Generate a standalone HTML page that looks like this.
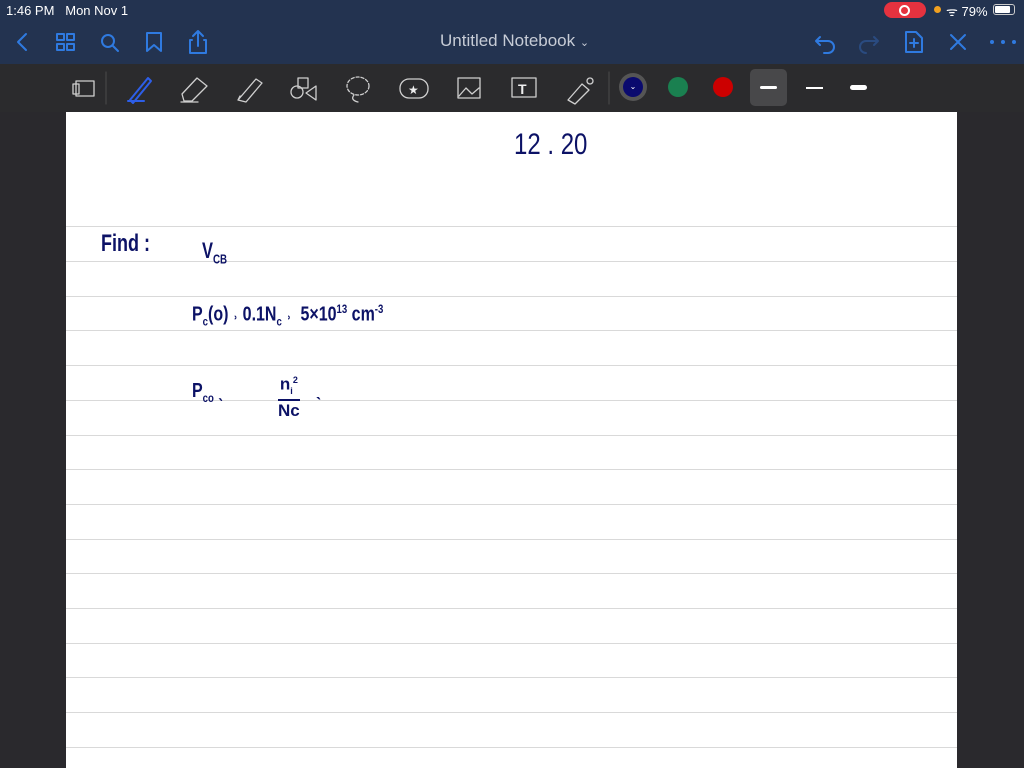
<!DOCTYPE html>
<html><head><meta charset="utf-8"><style>
*{margin:0;padding:0;box-sizing:border-box}
body{width:1024px;height:768px;overflow:hidden;background:#2a292d;font-family:"Liberation Sans",sans-serif;position:relative}
.hdr{position:absolute;left:0;top:0;width:1024px;height:64px;background:#233350}
.tb{position:absolute;left:0;top:64px;width:1024px;height:48px;background:#2b2b2d}
.paper{position:absolute;left:66px;top:112px;width:891px;height:656px;background:#fff}
.line{position:absolute;left:0;width:891px;height:1px;background:#d9d9d9}
.hw{position:absolute;color:#0c1266;font-family:"Liberation Sans",sans-serif;white-space:nowrap;font-weight:bold}
.t{position:absolute;color:#fff;font-size:13px}
svg{position:absolute}
</style></head><body>
<div class="hdr"></div>
<div class="tb"></div>
<div class="t" style="left:6px;top:3px">1:46 PM&nbsp;&nbsp;&nbsp;Mon Nov 1</div>
<div style="position:absolute;left:884px;top:2px;width:42px;height:16px;border-radius:8px;background:#e5323f"></div>
<div style="position:absolute;left:899px;top:5px;width:11px;height:11px;border-radius:50%;border:2px solid #fff"></div>
<div style="position:absolute;left:934px;top:6px;width:7px;height:7px;border-radius:50%;background:#f0a020"></div>
<div class="t" style="left:946px;top:2px">ᯤ 79%</div>
<div style="position:absolute;left:993px;top:4px;width:22px;height:11px;border:1px solid #ccc;border-radius:3px;padding:1px"><div style="width:15px;height:7px;background:#fff;border-radius:1px"></div></div>
<div style="position:absolute;left:440px;top:31px;color:#c7ccd6;font-size:17px">Untitled Notebook <span style="font-size:11px">⌄</span></div>
<svg width="1024" height="64" style="left:0;top:0" fill="none" stroke="#2f7ae0" stroke-width="2" stroke-linecap="round" stroke-linejoin="round">
<path d="M26 34 L18 42 L26 50"/>
<rect x="57" y="34" width="7" height="6"/><rect x="67" y="34" width="7" height="6"/><rect x="57" y="44" width="7" height="6"/><rect x="67" y="44" width="7" height="6"/>
<circle cx="108" cy="41" r="6"/><path d="M113 46 L118 51"/>
<path d="M147 33 H161 V51 L154 45 L147 51 Z"/>
<path d="M192 40 H190 V53 H206 V40 H204 M198 46 V31 M193 36 L198 31 L203 36"/>
<path d="M820 37 L816 41 L820 45 M816 41 H828 A6 6 0 0 1 828 53 H824"/>
<path d="M874 37 L878 41 L874 45 M878 41 H866 A6 6 0 0 0 866 53" stroke="#2a4b80"/>
<path d="M906 32 H916 L922 38 V52 H906 Z M914 39 V47 M910 43 H918"/>
<path d="M951 35 L965 49 M965 35 L951 49"/>
</svg>
<div style="position:absolute;left:990px;top:40px;width:26px;height:4px;display:flex;justify-content:space-between"><i style="width:4px;height:4px;border-radius:50%;background:#2f7ae0"></i><i style="width:4px;height:4px;border-radius:50%;background:#2f7ae0"></i><i style="width:4px;height:4px;border-radius:50%;background:#2f7ae0"></i></div>
<svg width="1024" height="48" style="left:0;top:64px" fill="none" stroke="#cfcfcf" stroke-width="1.3" stroke-linecap="round" stroke-linejoin="round">
<rect x="76" y="17" width="18" height="15"/><rect x="73" y="20" width="6" height="10"/>
<path d="M106 8 V40" stroke="#444"/>
<path d="M130 36 L148 14 L151 17 L133 39 Z" stroke="#2d5ee8" stroke-width="2"/><path d="M128 37 H144" stroke="#2d5ee8" stroke-width="2"/>
<path d="M182 30 L197 14 L207 22 L192 37 H184 Z M181 38 H198"/>
<path d="M238 36 L256 15 L262 19 L246 38 Z M238 36 L240 32"/>
<rect x="298" y="14" width="10" height="10"/><circle cx="297" cy="28" r="6"/><path d="M316 22 V36 L306 29 Z"/>
<ellipse cx="358" cy="22" rx="11" ry="9" stroke-dasharray="3 2"/><path d="M354 31 Q350 36 358 38"/>
<rect x="400" y="15" width="28" height="19" rx="9"/><text x="408" y="30" fill="#eee" stroke="none" font-size="12">★</text>
<rect x="458" y="14" width="22" height="20"/><path d="M459 32 L466 24 L472 30 L479 24"/>
<rect x="512" y="14" width="24" height="19"/><text x="518" y="30" fill="#eee" stroke="none" font-size="14" font-weight="bold">T</text>
<path d="M568 36 L582 20 L589 26 L575 40 Z"/><circle cx="590" cy="17" r="3"/>
<path d="M609 8 V40" stroke="#444"/>
</svg>
<div style="position:absolute;left:619px;top:73px;width:28px;height:28px;border-radius:50%;background:#555"></div>
<div style="position:absolute;left:623px;top:77px;width:20px;height:20px;border-radius:50%;background:#0a0a6e;color:#fff;font-size:8px;text-align:center;line-height:20px">⌄</div>
<div style="position:absolute;left:668px;top:77px;width:20px;height:20px;border-radius:50%;background:#1a8050"></div>
<div style="position:absolute;left:713px;top:77px;width:20px;height:20px;border-radius:50%;background:#cc0000"></div>
<div style="position:absolute;left:750px;top:69px;width:37px;height:37px;border-radius:5px;background:#48484a"></div>
<div style="position:absolute;left:760px;top:86px;width:17px;height:3px;background:#fff;border-radius:2px"></div>
<div style="position:absolute;left:806px;top:87px;width:17px;height:2px;background:#fff"></div>
<div style="position:absolute;left:850px;top:85px;width:17px;height:5px;background:#fff;border-radius:3px"></div>
<div class="paper">
<div class="line" style="top:114px"></div><div class="line" style="top:149px"></div><div class="line" style="top:184px"></div><div class="line" style="top:218px"></div><div class="line" style="top:253px"></div><div class="line" style="top:288px"></div><div class="line" style="top:323px"></div><div class="line" style="top:357px"></div><div class="line" style="top:392px"></div><div class="line" style="top:427px"></div><div class="line" style="top:461px"></div><div class="line" style="top:496px"></div><div class="line" style="top:531px"></div><div class="line" style="top:565px"></div><div class="line" style="top:600px"></div><div class="line" style="top:635px"></div>
<div class="hw" style="left:448px;top:16px;font-size:30px;font-weight:normal;transform:scaleX(.8);transform-origin:left">12 . 20</div>
<div class="hw" style="left:35px;top:118px;font-size:24px;transform:scaleX(.75);transform-origin:left">Find :</div>
<div class="hw" style="left:136px;top:126px;font-size:22px;transform:scaleX(.75);transform-origin:left">V<sub style="font-size:13px">CB</sub></div>
<div class="hw" style="left:126px;top:190px;font-size:20px;transform:scaleX(.8);transform-origin:left">P<sub style="font-size:12px">c</sub>(o) ˒ 0.1N<sub style="font-size:12px">c</sub> ˒ &nbsp;5×10<sup style="font-size:12px">13</sup> cm<sup style="font-size:12px">-3</sup></div>
<div class="hw" style="left:126px;top:268px;font-size:20px;transform:scaleX(.8);transform-origin:left">P<sub style="font-size:12px">co</sub> ˎ</div>
<div class="hw" style="left:212px;top:258px;font-size:17px;text-align:center;line-height:20px">n<sub style="font-size:9px">i</sub><sup style="font-size:9px">2</sup><div style="border-top:2px solid #0c1266;margin-top:-2px">Nc</div></div>
<div class="hw" style="left:250px;top:268px;font-size:18px">ˎ</div>
</div>
</body></html>
